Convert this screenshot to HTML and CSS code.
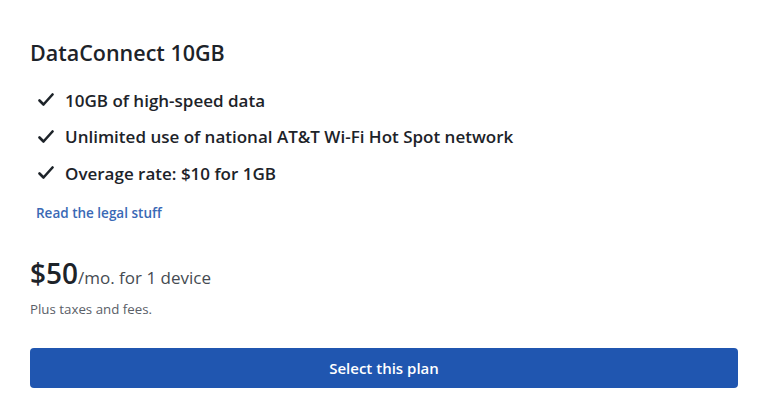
FILE: index.html
```html
<!DOCTYPE html>
<html lang="en">
<head>
    <meta charset="UTF-8">
    <meta name="viewport" content="width=device-width, initial-scale=1.0">
    <title>DataConnect 10GB</title>
    <link rel="stylesheet" href="styles.css">
</head>
<body>
    <div class="plan">
        <h2 class="plan-title">DataConnect 10GB</h2>
        <ul class="features">
            <li>
                <svg class="check" viewBox="0 0 16 14"><path d="M1.5 7.5 L5.5 11.5 L14.5 1.5"/></svg>
                <span>10GB of high-speed data</span>
            </li>
            <li>
                <svg class="check" viewBox="0 0 16 14"><path d="M1.5 7.5 L5.5 11.5 L14.5 1.5"/></svg>
                <span>Unlimited use of national AT&amp;T Wi-Fi Hot Spot network</span>
            </li>
            <li>
                <svg class="check" viewBox="0 0 16 14"><path d="M1.5 7.5 L5.5 11.5 L14.5 1.5"/></svg>
                <span>Overage rate: $10 for 1GB</span>
            </li>
        </ul>
        <a class="legal" href="#">Read the legal stuff</a>

        <div class="price">
            <span class="amount">$50</span><span class="per">/mo. for 1 device</span>
        </div>
        <p class="taxes">Plus taxes and fees.</p>

        <button class="select">Select this plan</button>
    </div>
</body>
</html>
```

FILE: styles.css
```css
body {
    margin: 0;
    background: #ffffff;
    font-family: "Open Sans", Arial, sans-serif;
    color: #1d2329;
}

.plan {
    padding: 38px 30px 0 30px;
}

.plan-title {
    margin: 0;
    font-size: 21.5px;
    font-weight: 600;
    line-height: 30px;
}

.features {
    list-style: none;
    margin: 14px 0 0 0;
    padding: 0 0 0 8px;
}

.features li {
    display: flex;
    align-items: center;
    height: 36.5px;
    font-size: 17px;
    font-weight: 600;
}

.check {
    width: 16px;
    height: 14px;
    margin-right: 11px;
    fill: none;
    stroke: #1d2329;
    stroke-width: 2.6;
    stroke-linecap: round;
    stroke-linejoin: round;
}

.legal {
    display: block;
    margin: 12px 0 0 6px;
    font-size: 13.5px;
    font-weight: 600;
    color: #3a69b5;
    text-decoration: none;
}

.price {
    margin-top: 32px;
    color: #454b52;
}

.amount {
    font-size: 28px;
    font-weight: 600;
    color: #1d2329;
}

.per {
    font-size: 17px;
    font-weight: 400;
}

.taxes {
    margin: 8px 0 0 0;
    font-size: 13.3px;
    color: #5a6068;
}

.select {
    display: block;
    width: 100%;
    height: 40px;
    margin-top: 30px;
    border: none;
    border-radius: 4px;
    background: #2056b0;
    color: #ffffff;
    font-family: "Open Sans", Arial, sans-serif;
    font-size: 15px;
    font-weight: 600;
}
```
